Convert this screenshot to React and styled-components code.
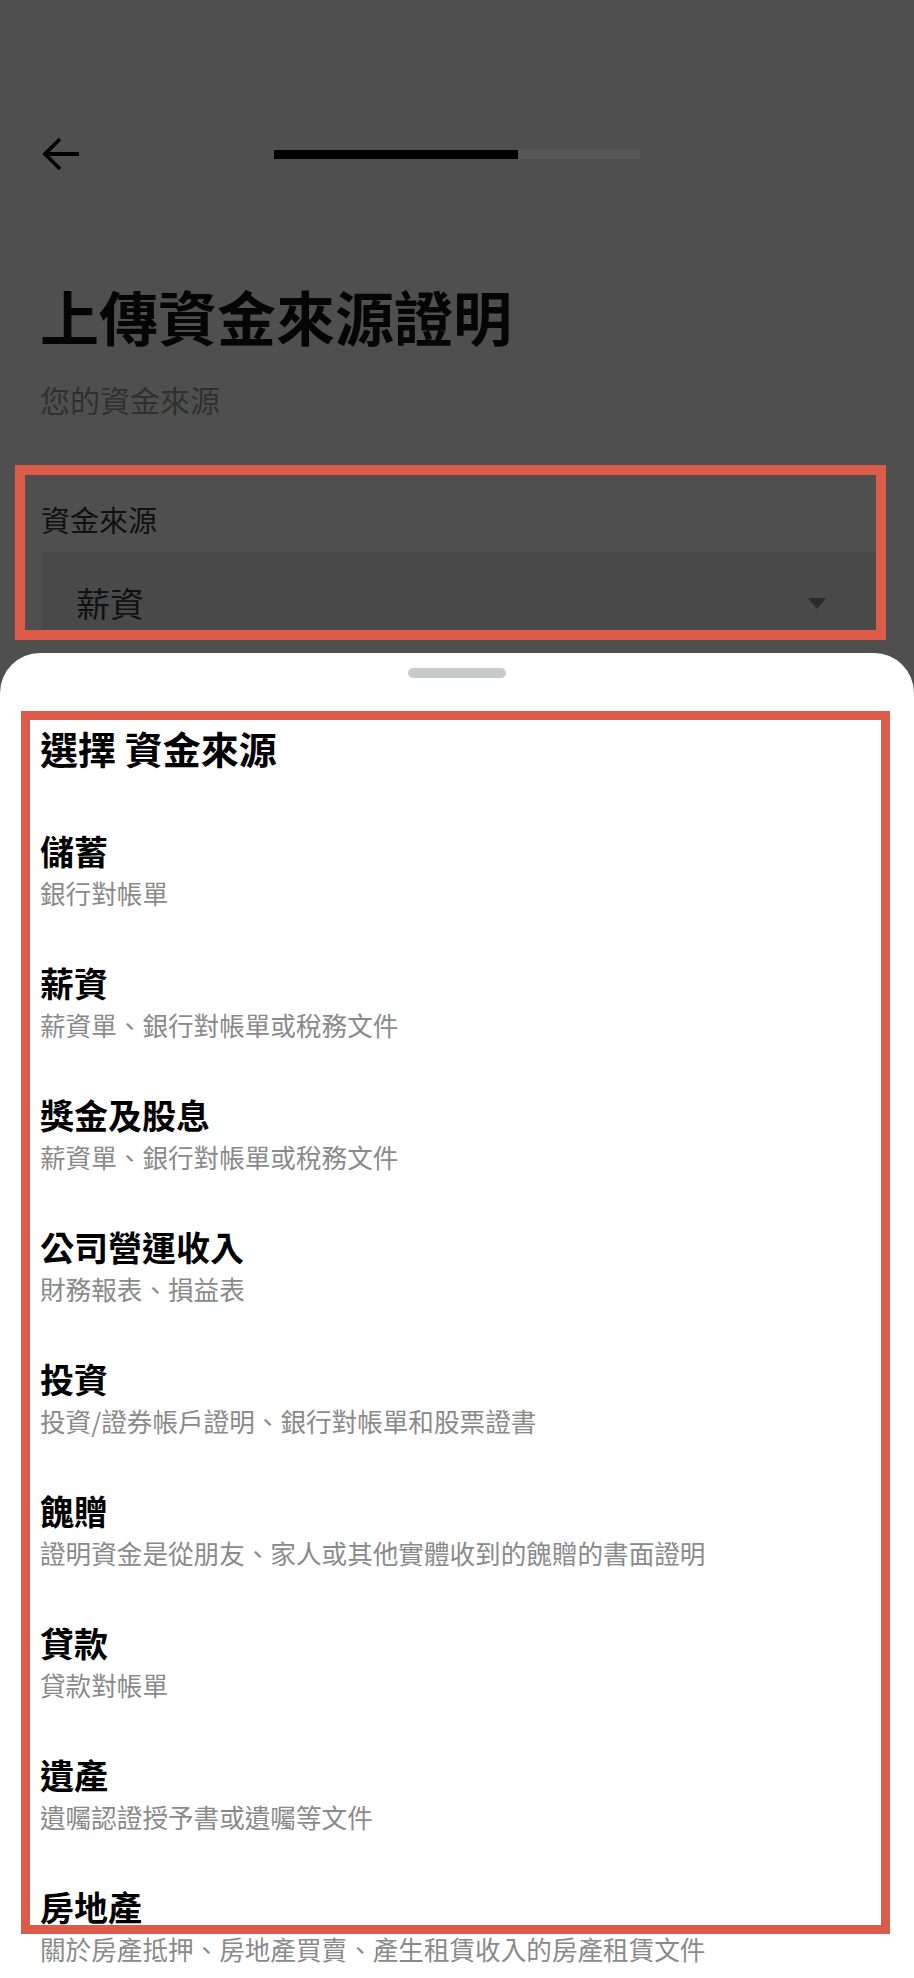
import React from "react";
import styled, { createGlobalStyle } from "styled-components";

const GlobalStyle = createGlobalStyle`
  html, body {
    margin: 0;
    padding: 0;
    background: #4f4f4f;
  }
  body {
    font-family: "Noto Sans CJK TC", "Noto Sans", sans-serif;
  }
`;

const Screen = styled.div`
  width: 914px;
  height: 1978px;
  display: flex;
  flex-direction: column;
  background: #4f4f4f;
  overflow: hidden;
`;

const Backdrop = styled.div`
  padding: 124px 0 0;
`;

const Header = styled.div`
  height: 60px;
  display: grid;
  grid-template-columns: 1fr auto 1fr;
  align-items: center;
  padding: 0 41px;
`;

const BackButton = styled.button`
  justify-self: start;
  display: flex;
  padding: 0;
  border: none;
  background: none;
  svg {
    display: block;
  }
`;

const Progress = styled.div`
  width: 366px;
  height: 9px;
  background: #575757;
  display: flex;
`;

const ProgressFill = styled.div`
  height: 100%;
  background: #000;
`;

const Title = styled.h1`
  margin: 97px 0 0 40px;
  font-size: 59px;
  line-height: 70px;
  font-weight: 700;
  color: #050505;
`;

const Subtitle = styled.p`
  margin: 28px 0 0 40px;
  font-size: 30px;
  line-height: 40px;
  color: #2f2f2f;
`;

const Highlight = styled.div`
  margin: 46px 0 0 15px;
  width: 871px;
  box-sizing: border-box;
  border: 10px solid #dc5b49;
  padding: 25px 0 0 16px;
  height: 175px;
  overflow: hidden;
`;

const FieldLabel = styled.div`
  font-size: 29px;
  line-height: 38px;
  color: #101010;
`;

const SelectBox = styled.div`
  margin: 14px 0 0 1px;
  height: 78px;
  background: #494949;
  display: flex;
  align-items: flex-start;
  padding: 30px 50px 0 34px;
  box-sizing: border-box;
`;

const SelectRow = styled.div`
  flex: 1;
  display: flex;
  align-items: center;
  justify-content: space-between;
  height: 42px;
`;

const SelectValue = styled.span`
  font-size: 34px;
  line-height: 42px;
  color: #111;
`;

const Caret = styled.span`
  width: 0;
  height: 0;
  border-left: 9px solid transparent;
  border-right: 9px solid transparent;
  border-top: 11px solid #2b2b2b;
`;

const Sheet = styled.div`
  position: relative;
  flex: 1;
  margin-top: 13px;
  background: #fff;
  border-radius: 40px 40px 0 0;
  padding: 15px 0 0 40px;
`;

const Handle = styled.div`
  width: 98px;
  height: 10px;
  border-radius: 5px;
  background: #c9cacb;
  margin: 0 auto 0 368px;
`;

const SheetFrame = styled.div`
  position: absolute;
  top: 58px;
  left: 21px;
  width: 869px;
  height: 1223px;
  box-sizing: border-box;
  border: 9px solid #dc5b49;
  pointer-events: none;
`;

const SheetTitle = styled.h2`
  margin: 46px 0 7px;
  font-size: 38px;
  line-height: 48px;
  font-weight: 700;
  color: #000;
`;

const Option = styled.div`
  padding-top: 50px;
  display: flex;
  flex-direction: column;
  gap: 2px;
`;

const OptionName = styled.div`
  font-size: 34px;
  line-height: 44px;
  font-weight: 700;
  color: #000;
`;

const OptionHint = styled.div`
  font-size: 25.6px;
  line-height: 36px;
  color: #8a8a8a;
`;

const options = [
  ["儲蓄", "銀行對帳單"],
  ["薪資", "薪資單、銀行對帳單或稅務文件"],
  ["獎金及股息", "薪資單、銀行對帳單或稅務文件"],
  ["公司營運收入", "財務報表、損益表"],
  ["投資", "投資/證券帳戶證明、銀行對帳單和股票證書"],
  ["餽贈", "證明資金是從朋友、家人或其他實體收到的餽贈的書面證明"],
  ["貸款", "貸款對帳單"],
  ["遺產", "遺囑認證授予書或遺囑等文件"],
  ["房地產", "關於房產抵押、房地產買賣、產生租賃收入的房產租賃文件"],
];

const ArrowLeft = () => (
  <svg width="40" height="34" viewBox="0 0 40 34" fill="none">
    <path
      d="M38 17H4M19 2L4 17l15 15"
      stroke="#000"
      strokeWidth="3.8"
      strokeLinecap="butt"
      strokeLinejoin="miter"
    />
  </svg>
);

export default function App() {
  const step = 244 / 366;
  return (
    <>
      <GlobalStyle />
      <Screen>
        <Backdrop>
          <Header>
            <BackButton aria-label="返回">
              <ArrowLeft />
            </BackButton>
            <Progress>
              <ProgressFill style={{ width: `${step * 100}%` }} />
            </Progress>
            <div />
          </Header>
          <Title>上傳資金來源證明</Title>
          <Subtitle>您的資金來源</Subtitle>
          <Highlight>
            <FieldLabel>資金來源</FieldLabel>
            <SelectBox>
              <SelectRow>
                <SelectValue>薪資</SelectValue>
                <Caret />
              </SelectRow>
            </SelectBox>
          </Highlight>
        </Backdrop>
        <Sheet>
          <Handle />
          <SheetTitle>選擇 資金來源</SheetTitle>
          {options.map(([name, hint]) => (
            <Option key={name}>
              <OptionName>{name}</OptionName>
              <OptionHint>{hint}</OptionHint>
            </Option>
          ))}
          <SheetFrame />
        </Sheet>
      </Screen>
    </>
  );
}
